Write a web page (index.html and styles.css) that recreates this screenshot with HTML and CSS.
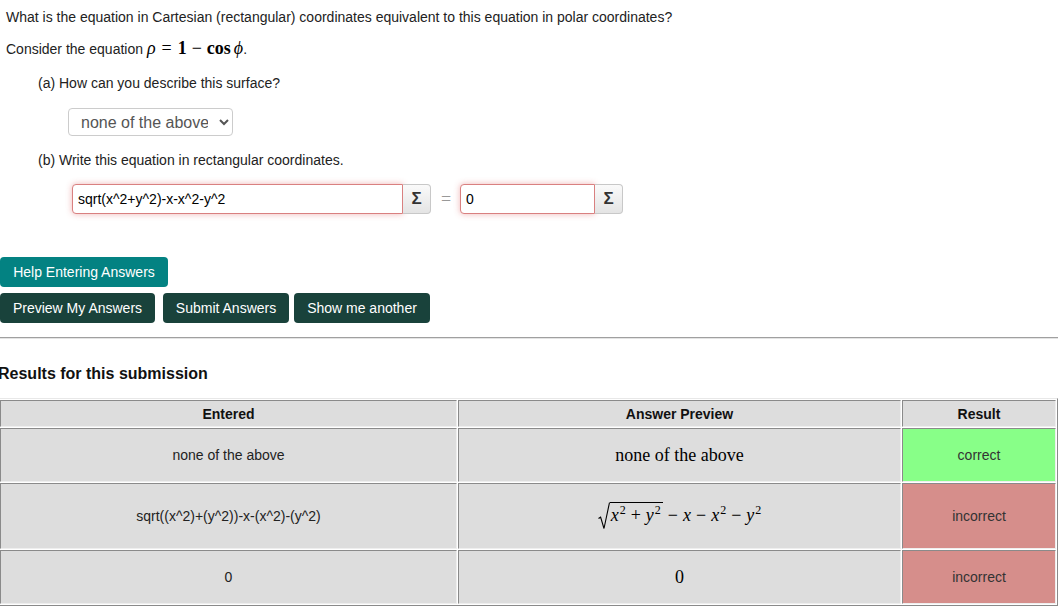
FILE: index.html
```html
<!doctype html>
<html>
    <head>
        <meta charset=utf-8>
        <title>Problem</title>
        <link rel="stylesheet" href="styles.css">
    </head>
    <body>
        <form class="problem-form" action="#" method="POST">
            <div class="problem">
                <p class="lead">What is the equation in Cartesian (rectangular) coordinates equivalent to this equation in polar coordinates?</p>
                <p class="lead">Consider the equation <span class="math"><i>ρ</i><span class="rel">=</span><b>1</b><span class="bin">−</span><b>cos</b><span class="thin"></span><i>ϕ</i></span>.</p>

                <p class="part">(a) How can you describe this surface?</p>
                <div class="answer-select">
                    <select name="AnSwEr0001">
                        <option>?</option>
                        <option selected>none of the above</option>
                    </select>
                </div>

                <p class="part">(b) Write this equation in rectangular coordinates.</p>
                <div class="answer-row">
                    <input class="answer incorrect wide" type="text" name="AnSwEr0002" value="sqrt(x^2+y^2)-x-x^2-y^2">
                    <button class="sigma" type="button">Σ</button>
                    <span class="equals">=</span>
                    <input class="answer incorrect narrow" type="text" name="AnSwEr0003" value="0">
                    <button class="sigma" type="button">Σ</button>
                </div>
            </div>

            <div class="help-row">
                <button class="btn-help" type="button">Help Entering Answers</button>
            </div>
            <div class="submit-row">
                <button class="btn-dark preview" type="submit">Preview My Answers</button>
                <button class="btn-dark submit" type="submit">Submit Answers</button>
                <button class="btn-dark another" type="submit">Show me another</button>
            </div>
        </form>

        <hr>

        <h3 class="results-title">Results for this submission</h3>
        <table class="attemptResults">
            <tr>
                <th class="col-entered">Entered</th>
                <th class="col-preview">Answer Preview</th>
                <th class="col-result">Result</th>
            </tr>
            <tr>
                <td>none of the above</td>
                <td class="preview-cell"><span class="math">none of the above</span></td>
                <td class="correct">correct</td>
            </tr>
            <tr class="tall">
                <td>sqrt((x^2)+(y^2))-x-(x^2)-(y^2)</td>
                <td class="preview-cell">
                    <span class="math"><span class="sqrt"><svg class="radical" width="12" height="28" viewBox="0 0 12 28"><path d="M0.5 16.5 L2.6 15.2 L6 26.5 L11.5 0.5" fill="none" stroke="#000" stroke-width="1.1"/></svg><span class="radicand"><i>x</i><sup>2</sup><span class="bin">+</span><i>y</i><sup>2</sup></span></span><span class="bin">−</span><i>x</i><span class="bin">−</span><i>x</i><sup>2</sup><span class="bin">−</span><i>y</i><sup>2</sup></span>
                </td>
                <td class="incorrect-cell">incorrect</td>
            </tr>
            <tr>
                <td>0</td>
                <td class="preview-cell"><span class="math">0</span></td>
                <td class="incorrect-cell">incorrect</td>
            </tr>
        </table>
    </body>
</html>
```

FILE: styles.css
```css
:root {
  --text: #222;
  --teal: #038282;
  --darkGreen: #19423b;
  --cellBg: #dddddd;
  --correct: #88ff88;
  --incorrect: #d68e8b;
}

* {
  box-sizing: border-box;
}

body {
  margin: 0;
  font: 14px/20px "Liberation Sans", Arial, sans-serif;
  color: var(--text);
  background: #fff;
}

p {
  margin: 0;
}

.problem {
  padding: 7px 0 0 6px;
}

.lead {
  height: 20px;
  margin-bottom: 12px;
}

.lead + .lead {
  margin-bottom: 14px;
}

.math {
  font-family: "Liberation Serif", "Times New Roman", serif;
  font-size: 17px;
  color: #000;
}

.math i {
  font-style: italic;
}

.lead .math {
  font-size: 18px;
  line-height: 1;
}

.lead .math b {
  font-weight: bold;
}

.math .rel {
  margin: 0 6px;
}

.math .bin {
  margin: 0 5px;
}

.math .thin {
  display: inline-block;
  width: 3px;
}

.part {
  padding-left: 32px;
}

.answer-select {
  padding-left: 62px;
  margin: 15px 0 14px;
}

.answer-select select {
  width: 165px;
  height: 28px;
  padding: 0 8px;
  font: 16px "Liberation Sans", Arial, sans-serif;
  color: #555;
  background: #fff;
  border: 1px solid #ccc;
  border-radius: 4px;
}

.answer-row {
  display: flex;
  align-items: center;
  padding-left: 66px;
  margin-top: 14px;
  height: 30px;
}

.answer {
  height: 30px;
  padding: 0 5px;
  font: 14px "Liberation Sans", Arial, sans-serif;
  color: #000;
  background: #fff;
  border: 1px solid #d98080;
  border-radius: 4px 0 0 4px;
  box-shadow: 0 0 6px rgba(220, 90, 90, 0.45);
}

.answer.wide {
  width: 331px;
}

.answer.narrow {
  width: 135px;
}

.sigma {
  width: 28px;
  height: 30px;
  padding: 0;
  font: bold 17px "Liberation Sans", Arial, sans-serif;
  color: #333;
  background: linear-gradient(#fafafa, #e4e4e4);
  border: 1px solid #c8c8c8;
  border-left: none;
  border-radius: 0 4px 4px 0;
}

.equals {
  width: 12px;
  margin: 0 8px 0 9px;
  font: 18px "Liberation Serif", serif;
  color: #999;
  text-align: center;
}

.help-row {
  margin-top: 43px;
}

button {
  cursor: pointer;
}

.btn-help,
.btn-dark {
  height: 30px;
  padding: 0 12px;
  font: 14px "Liberation Sans", Arial, sans-serif;
  color: #fff;
  border: none;
  border-radius: 4px;
}

.btn-help {
  width: 168px;
  background: var(--teal);
}

.submit-row {
  display: flex;
  margin-top: 6px;
}

.btn-dark {
  background: var(--darkGreen);
}

.btn-dark.preview {
  width: 155px;
  margin-right: 8px;
}

.btn-dark.submit {
  width: 126px;
  margin-right: 5px;
}

.btn-dark.another {
  width: 136px;
}

hr {
  margin: 14px 0 0;
  border: none;
  border-top: 1px solid #a0a0a0;
  border-bottom: 1px solid #e4e4e4;
}

.results-title {
  margin: 25px 0 14px -2px;
  font: bold 16px/20px "Liberation Sans", Arial, sans-serif;
  color: #111;
}

.attemptResults {
  margin-left: -2px;
  width: 1059px;
  border-collapse: separate;
  border-spacing: 1px;
  border: 1px solid;
  border-color: #e8e8e8 #8a8a8a #8a8a8a #e8e8e8;
  table-layout: fixed;
}

.attemptResults th,
.attemptResults td {
  background: var(--cellBg);
  text-align: center;
  border: 1px solid;
  border-color: #8a8a8a #eeeeee #eeeeee #8a8a8a;
}

.attemptResults th {
  height: 27px;
  padding: 0 4px;
  font-weight: bold;
  color: #111;
}

.attemptResults td {
  height: 54px;
  padding: 0 4px;
  color: #222;
}

.attemptResults tr.tall td {
  height: 66px;
}

.col-entered {
  width: 457px;
}

.col-preview {
  width: 443px;
}

.col-result {
  width: 154px;
}

.preview-cell .math {
  font-size: 18px;
}

.sqrt {
  display: inline-flex;
  align-items: flex-start;
  vertical-align: -9px;
}

.radical {
  display: block;
}

.radicand {
  border-top: 1px solid #000;
  padding: 1px 2px 0 1px;
  line-height: 22px;
}

.math sup {
  font-size: 12px;
  line-height: 0;
  margin-left: 1px;
}

.attemptResults td.correct {
  background: var(--correct);
  color: #333;
}

.attemptResults td.incorrect-cell {
  background: var(--incorrect);
  color: #333;
}
```
